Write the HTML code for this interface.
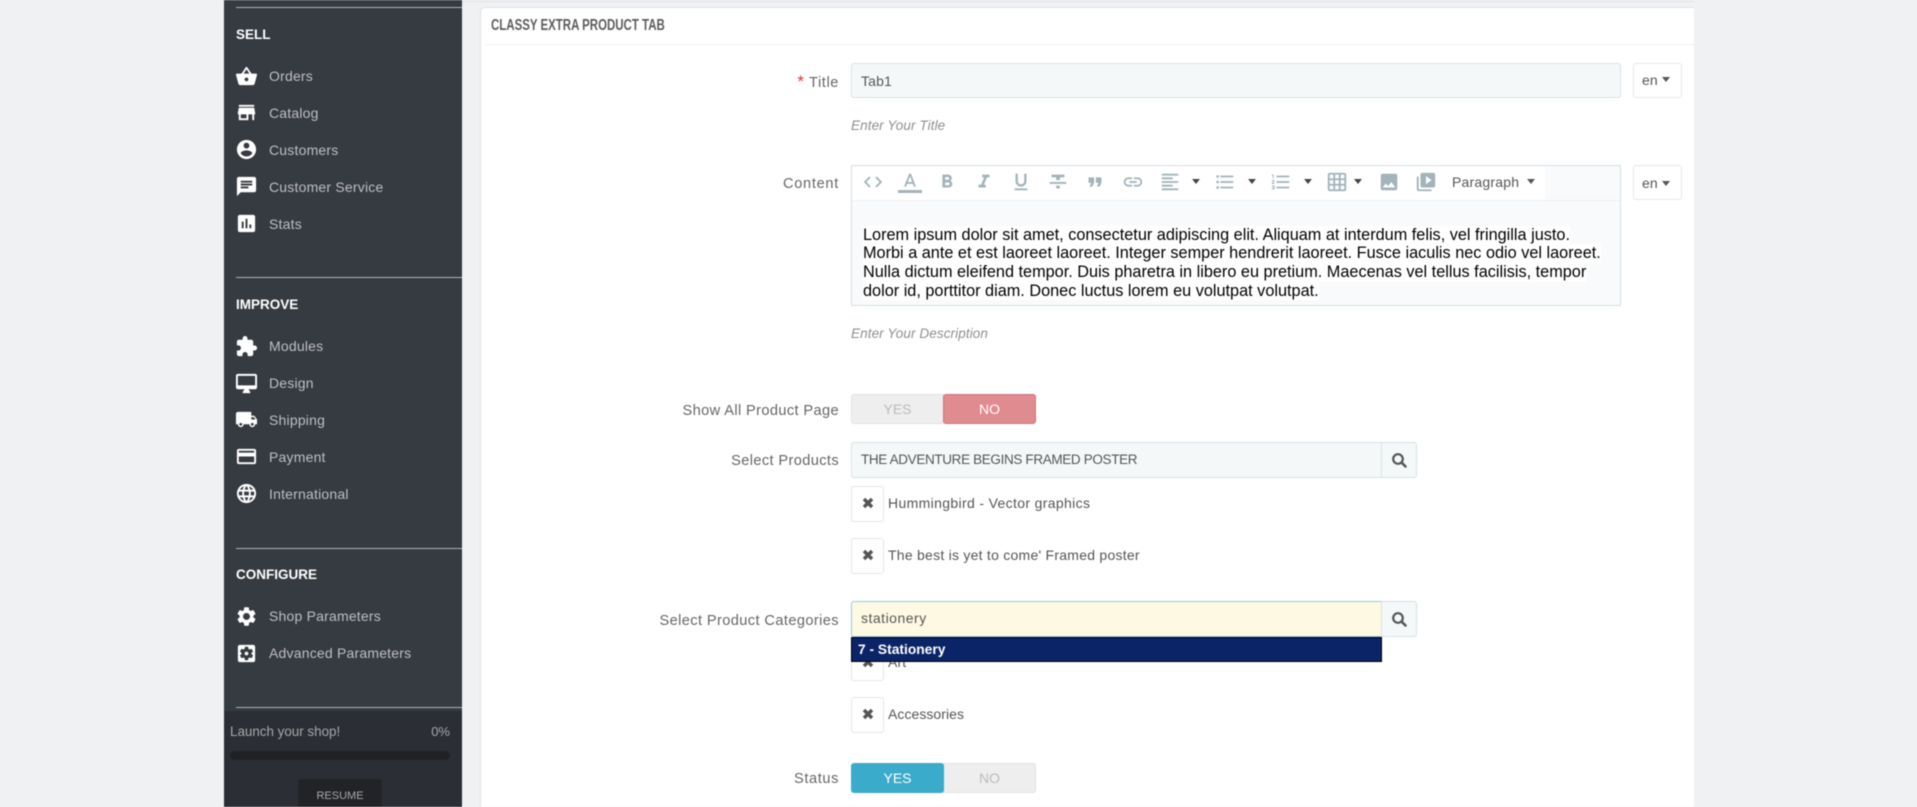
<!DOCTYPE html>
<html><head><meta charset="utf-8"><style>
html,body{margin:0;padding:0;width:1917px;height:807px;overflow:hidden;background:#eff1f3}
#r{position:relative;width:1917px;height:807px;overflow:hidden;font-family:"Liberation Sans",sans-serif;filter:blur(.4px)}
#r div,#r svg{position:absolute}
.t{white-space:nowrap;line-height:20px;height:20px;margin-top:1px}
.n{left:269px;color:#bdbfc2;font-size:14px;letter-spacing:.2px;margin-top:0}
.h{left:236px;color:#fff;font-size:13.5px;font-weight:bold}
.d{left:236px;width:226px;height:1px;background:#a7b7bd}
.si{left:235px;width:23px;height:23px;fill:#fff}
.l{right:1078px;color:#666;font-size:14.6px;letter-spacing:.38px;text-align:right}
.hint{left:851px;color:#8f8f8f;font-size:13.5px;font-style:italic;letter-spacing:.1px}
.inp{box-sizing:border-box;background:#f5f8f9;border:1px solid #d5e1e5;border-radius:3px}
.v{color:#555;font-size:14px;letter-spacing:.15px}
.en{box-sizing:border-box;left:1633px;width:49px;height:35px;background:#fff;border:1px solid #e4e9ea;border-radius:3px}
.car{width:0;height:0;border-left:4.5px solid transparent;border-right:4.5px solid transparent;border-top:5px solid #555}
.xb{box-sizing:border-box;left:851px;width:33px;height:36px;background:#fff;border:1px solid #e3e6e8;border-radius:3px}
.ti{width:22px;height:22px;top:171px;fill:#a2b3ba}
.tc{border-top-color:#444}
.b{margin-top:0;height:18.5px;line-height:18.5px;color:#000;font-size:16.27px;left:863px;background:#fff}
</style></head><body><div id="r">
<div style="left:224px;top:0;width:238px;height:807px;background:#363a41"></div>
<div class="d" style="top:7px"></div>
<div class="t h" style="top:24px">SELL</div>
<svg class="si" style="top:65px" viewBox="0 0 24 24"><path d="M17.21 9l-4.38-6.56c-.19-.28-.51-.42-.83-.42-.32 0-.64.14-.83.43L6.79 9H2c-.55 0-1 .45-1 1 0 .09.01.18.04.27l2.54 9.27c.23.84 1 1.46 1.92 1.46h13c.92 0 1.69-.62 1.93-1.46l2.54-9.27L23 10c0-.55-.45-1-1-1h-4.79zM9 9l3-4.4L15 9H9zm3 8c-1.1 0-2-.9-2-2s.9-2 2-2 2 .9 2 2-.9 2-2 2z"/></svg>
<div class="t n" style="top:66px">Orders</div>
<svg class="si" style="top:101px" viewBox="0 0 24 24"><path d="M20 4H4v2h16V4zm1 10v-2l-1-5H4l-1 5v2h1v6h10v-6h4v6h2v-6h1zm-9 4H6v-4h6v4z"/></svg>
<div class="t n" style="top:103px">Catalog</div>
<svg class="si" style="top:138px" viewBox="0 0 24 24"><path d="M12 2C6.48 2 2 6.48 2 12s4.48 10 10 10 10-4.48 10-10S17.52 2 12 2zm0 3c1.66 0 3 1.34 3 3s-1.34 3-3 3-3-1.34-3-3 1.34-3 3-3zm0 14.2c-2.5 0-4.71-1.28-6-3.22.03-1.99 4-3.08 6-3.08 1.99 0 5.97 1.09 6 3.08-1.29 1.94-3.5 3.22-6 3.22z"/></svg>
<div class="t n" style="top:140px">Customers</div>
<svg class="si" style="top:175px" viewBox="0 0 24 24"><path d="M20 2H4c-1.1 0-1.99.9-1.99 2L2 22l4-4h14c1.1 0 2-.9 2-2V4c0-1.1-.9-2-2-2zM6 9h12v2H6V9zm8 5H6v-2h8v2zm4-6H6V6h12v2z"/></svg>
<div class="t n" style="top:177px">Customer Service</div>
<svg class="si" style="top:212px" viewBox="0 0 24 24"><path d="M19 3H5c-1.1 0-2 .9-2 2v14c0 1.1.9 2 2 2h14c1.1 0 2-.9 2-2V5c0-1.1-.9-2-2-2zM9 17H7v-7h2v7zm4 0h-2V7h2v10zm4 0h-2v-4h2v4z"/></svg>
<div class="t n" style="top:214px">Stats</div>

<div class="d" style="top:277px"></div>
<div class="t h" style="top:294px">IMPROVE</div>
<svg class="si" style="top:335px" viewBox="0 0 24 24"><path d="M20.5 11H19V7c0-1.1-.9-2-2-2h-4V3.5C13 2.12 11.88 1 10.5 1S8 2.12 8 3.5V5H4c-1.1 0-1.99.9-1.99 2v3.8H3.5c1.49 0 2.7 1.21 2.7 2.7s-1.21 2.7-2.7 2.7H2V20c0 1.1.9 2 2 2h3.8v-1.5c0-1.49 1.21-2.7 2.7-2.7 1.49 0 2.7 1.21 2.7 2.7V22H17c1.1 0 2-.9 2-2v-4h1.5c1.38 0 2.5-1.12 2.5-2.5S21.88 11 20.5 11z"/></svg>
<div class="t n" style="top:336px">Modules</div>
<svg class="si" style="top:372px" viewBox="0 0 24 24"><path d="M21 2H3c-1.1 0-2 .9-2 2v12c0 1.1.9 2 2 2h7l-2 3v1h8v-1l-2-3h7c1.1 0 2-.9 2-2V4c0-1.1-.9-2-2-2zm0 12H3V4h18v10z"/></svg>
<div class="t n" style="top:373px">Design</div>
<svg class="si" style="top:408px" viewBox="0 0 24 24"><path d="M20 8h-3V4H3c-1.1 0-2 .9-2 2v11h2c0 1.66 1.34 3 3 3s3-1.34 3-3h6c0 1.66 1.34 3 3 3s3-1.34 3-3h2v-5l-3-4zM6 18.5c-.83 0-1.5-.67-1.5-1.5s.67-1.5 1.5-1.5 1.5.67 1.5 1.5-.67 1.5-1.5 1.5zm13.5-9l1.96 2.5H17V9.5h2.5zm-1.5 9c-.83 0-1.5-.67-1.5-1.5s.67-1.5 1.5-1.5 1.5.67 1.5 1.5-.67 1.5-1.5 1.5z"/></svg>
<div class="t n" style="top:410px">Shipping</div>
<svg class="si" style="top:445px" viewBox="0 0 24 24"><path d="M20 4H4c-1.11 0-1.99.89-1.99 2L2 18c0 1.11.89 2 2 2h16c1.11 0 2-.89 2-2V6c0-1.11-.89-2-2-2zm0 14H4v-6h16v6zm0-10H4V6h16v2z"/></svg>
<div class="t n" style="top:447px">Payment</div>
<svg class="si" style="top:482px" viewBox="0 0 24 24"><path d="M11.99 2C6.47 2 2 6.48 2 12s4.47 10 9.99 10C17.52 22 22 17.52 22 12S17.52 2 11.99 2zm6.93 6h-2.95c-.32-1.25-.78-2.45-1.38-3.56 1.84.63 3.37 1.91 4.33 3.56zM12 4.04c.83 1.2 1.48 2.53 1.91 3.96h-3.82c.43-1.43 1.08-2.76 1.91-3.96zM4.26 14C4.1 13.36 4 12.69 4 12s.1-1.36.26-2h3.38c-.08.66-.14 1.32-.14 2 0 .68.06 1.34.14 2H4.26zm.82 2h2.95c.32 1.25.78 2.45 1.38 3.56-1.84-.63-3.37-1.9-4.33-3.56zm2.95-8H5.08c.96-1.66 2.49-2.93 4.33-3.56C8.81 5.55 8.35 6.75 8.03 8zM12 19.96c-.83-1.2-1.48-2.53-1.91-3.96h3.82c-.43 1.43-1.08 2.76-1.91 3.96zM14.34 14H9.66c-.09-.66-.16-1.32-.16-2 0-.68.07-1.35.16-2h4.68c.09.65.16 1.32.16 2 0 .68-.07 1.34-.16 2zm.25 5.56c.6-1.11 1.06-2.31 1.38-3.56h2.95c-.96 1.65-2.49 2.93-4.33 3.56zM16.36 14c.08-.66.14-1.32.14-2 0-.68-.06-1.34-.14-2h3.38c.16.64.26 1.31.26 2s-.1 1.36-.26 2h-3.38z"/></svg>
<div class="t n" style="top:484px">International</div>

<div class="d" style="top:548px"></div>
<div class="t h" style="top:564px">CONFIGURE</div>
<svg class="si" style="top:605px" viewBox="0 0 24 24"><path d="M19.14 12.94c.04-.3.06-.61.06-.94 0-.32-.02-.64-.07-.94l2.03-1.58c.18-.14.23-.41.12-.61l-1.92-3.32c-.12-.22-.37-.29-.59-.22l-2.39.96c-.5-.38-1.03-.7-1.62-.94l-.36-2.54c-.04-.24-.24-.41-.48-.41h-3.84c-.24 0-.43.17-.47.41l-.36 2.54c-.59.24-1.13.57-1.62.94l-2.39-.96c-.22-.08-.47 0-.59.22L2.74 8.87c-.12.21-.08.47.12.61l2.03 1.58c-.05.3-.09.63-.09.94s.02.64.07.94l-2.03 1.58c-.18.14-.23.41-.12.61l1.92 3.32c.12.22.37.29.59.22l2.39-.96c.5.38 1.03.7 1.62.94l.36 2.54c.05.24.24.41.48.41h3.84c.24 0 .44-.17.47-.41l.36-2.54c.59-.24 1.13-.56 1.62-.94l2.39.96c.22.08.47 0 .59-.22l1.92-3.32c.12-.22.07-.47-.12-.61l-2.01-1.58zM12 15.6c-1.98 0-3.6-1.62-3.6-3.6s1.62-3.6 3.6-3.6 3.6 1.62 3.6 3.6-1.62 3.6-3.6 3.6z"/></svg>
<div class="t n" style="top:606px">Shop Parameters</div>
<svg class="si" style="top:642px" viewBox="0 0 24 24"><path d="M12 10c-1.1 0-2 .9-2 2s.9 2 2 2 2-.9 2-2-.9-2-2-2zm7-7H5c-1.11 0-2 .9-2 2v14c0 1.1.89 2 2 2h14c1.11 0 2-.9 2-2V5c0-1.1-.89-2-2-2zm-1.75 9c0 .23-.02.46-.05.68l1.48 1.16c.13.11.17.3.08.45l-1.4 2.42c-.09.15-.27.21-.43.15l-1.74-.7c-.36.28-.76.51-1.18.69l-.26 1.85c-.03.17-.18.3-.35.3h-2.8c-.17 0-.32-.13-.35-.29l-.26-1.85c-.43-.18-.82-.41-1.18-.69l-1.74.7c-.16.06-.34 0-.43-.15l-1.4-2.42c-.09-.15-.05-.34.08-.45l1.48-1.16c-.03-.23-.05-.46-.05-.69 0-.23.02-.46.05-.68l-1.48-1.16c-.13-.11-.17-.3-.08-.45l1.4-2.42c.09-.15.27-.21.43-.15l1.74.7c.36-.28.76-.51 1.18-.69l.26-1.85c.03-.17.18-.3.35-.3h2.8c.17 0 .32.13.35.29l.26 1.85c.43.18.82.41 1.18.69l1.74-.7c.16-.06.34 0 .43.15l1.4 2.42c.09.15.05.34-.08.45l-1.48 1.16c.03.23.05.46.05.69z"/></svg>
<div class="t n" style="top:643px">Advanced Parameters</div>
<div class="d" style="top:707px"></div>
<div style="left:224px;top:711px;width:238px;height:96px;background:#2b2e34"></div>
<div class="t" style="left:230px;top:720.5px;color:#a5a8ab;font-size:13.4px">Launch your shop!</div>
<div class="t" style="right:1467px;top:720.5px;color:#a5a8ab;font-size:13px">0%</div>
<div style="left:230px;top:751px;width:220px;height:9px;border-radius:5px;background:#1f2125"></div>
<div style="left:298px;top:779px;width:84px;height:28px;border-radius:3px 3px 0 0;background:#212327"></div>
<div class="t" style="left:298px;width:84px;top:785px;text-align:center;color:#a5a8ab;font-size:11px">RESUME</div>

<div style="left:462px;top:1px;width:1232px;height:1px;background:#e3e6e8"></div>
<div style="box-sizing:border-box;left:480px;top:7px;width:1214px;height:800px;background:#fff;border:1px solid #dfe4e7;border-right:0;border-bottom:0;border-radius:5px 0 0 0"></div>
<div class="t" style="left:491px;top:15px;color:#5c5c5c;font-size:15.5px;font-weight:bold;transform:scaleX(.74);transform-origin:0 50%">CLASSY EXTRA PRODUCT TAB</div>
<div style="left:485px;top:44px;width:1209px;height:1px;background:#eef0f1"></div>

<div class="t l" style="top:71px;letter-spacing:.6px"><span style="color:#e0313c;font-size:17px">*</span> Title</div>
<div class="inp" style="left:851px;top:63px;width:770px;height:35px"></div>
<div class="t v" style="left:861px;top:69.5px">Tab1</div>
<div class="en" style="top:63px"></div><div class="t v" style="left:1642px;top:69px">en</div><div class="car" style="left:1662px;top:77px"></div>
<div class="t hint" style="top:115px">Enter Your Title</div>

<div class="t l" style="top:173px;letter-spacing:.7px">Content</div>
<div class="inp" style="left:851px;top:165px;width:770px;height:141px;background:#f8fafb;border-radius:0"></div>
<div style="left:852px;top:166px;width:693px;height:34px;background:#fff"></div>
<div style="left:852px;top:200px;width:768px;height:1px;background:#eef1f3"></div>
<svg class="ti" style="left:862px" viewBox="0 0 24 24"><path d="M9.4 16.6L4.8 12l4.6-4.6L8 6l-6 6 6 6 1.4-1.4zm5.2 0l4.6-4.6-4.6-4.6L16 6l6 6-6 6-1.4-1.4z"/></svg>
<svg class="ti" style="left:899px;top:171px" viewBox="0 0 24 24"><path d="M11 3L5.5 17h2.25l1.12-3h6.25l1.12 3h2.25L13 3h-2zm-1.38 9L12 5.67 14.38 12H9.62z"/></svg>
<div style="left:898px;top:190px;width:24px;height:3px;background:#a2b3ba"></div>
<svg class="ti" style="left:936px" viewBox="0 0 24 24"><path d="M15.6 10.79c.97-.67 1.65-1.77 1.65-2.79 0-2.26-1.75-4-4-4H7v14h7.04c2.09 0 3.71-1.7 3.71-3.79 0-1.52-.86-2.82-2.15-3.42zM10 6.5h3c.83 0 1.5.67 1.5 1.5s-.67 1.5-1.5 1.5h-3v-3zm3.5 9H10v-3h3.5c.83 0 1.5.67 1.5 1.5s-.67 1.5-1.5 1.5z"/></svg>
<svg class="ti" style="left:973px" viewBox="0 0 24 24"><path d="M10 4v3h2.21l-3.42 8H6v3h8v-3h-2.21l3.42-8H18V4z"/></svg>
<svg class="ti" style="left:1010px" viewBox="0 0 24 24"><path d="M12 17c3.31 0 6-2.69 6-6V3h-2.5v8c0 1.93-1.57 3.5-3.5 3.5S8.5 12.93 8.5 11V3H6v8c0 3.31 2.69 6 6 6zm-7 2v2h14v-2H5z"/></svg>
<svg class="ti" style="left:1047px" viewBox="0 0 24 24"><path d="M10 19h4v-3h-4v3zM5 4v3h5v3h4V7h5V4H5zM3 14h18v-2H3v2z"/></svg>
<svg class="ti" style="left:1084px" viewBox="0 0 24 24"><path d="M6 17h3l2-4V7H5v6h3zm8 0h3l2-4V7h-6v6h3z"/></svg>
<svg class="ti" style="left:1122px" viewBox="0 0 24 24"><path d="M3.9 12c0-1.71 1.39-3.1 3.1-3.1h4V7H7c-2.76 0-5 2.24-5 5s2.24 5 5 5h4v-1.9H7c-1.71 0-3.1-1.39-3.1-3.1zM8 13h8v-2H8v2zm9-6h-4v1.9h4c1.71 0 3.1 1.39 3.1 3.1s-1.39 3.1-3.1 3.1h-4V17h4c2.76 0 5-2.24 5-5s-2.24-5-5-5z"/></svg>
<svg class="ti" style="left:1159px" viewBox="0 0 24 24"><path d="M15 15H3v2h12v-2zm0-8H3v2h12V7zM3 13h18v-2H3v2zm0 8h18v-2H3v2zM3 3v2h18V3H3z"/></svg>
<div class="car tc" style="left:1192px;top:179px"></div>
<svg class="ti" style="left:1214px" viewBox="0 0 24 24"><path d="M4 10.5c-.83 0-1.5.67-1.5 1.5s.67 1.5 1.5 1.5 1.5-.67 1.5-1.5-.67-1.5-1.5-1.5zm0-6c-.83 0-1.5.67-1.5 1.5S3.17 7.5 4 7.5 5.5 6.83 5.5 6 4.83 4.5 4 4.5zm0 12c-.83 0-1.5.68-1.5 1.5s.68 1.5 1.5 1.5 1.5-.68 1.5-1.5-.67-1.5-1.5-1.5zM7 19h14v-2H7v2zm0-6h14v-2H7v2zm0-8v2h14V5H7z"/></svg>
<div class="car tc" style="left:1248px;top:179px"></div>
<svg class="ti" style="left:1270px" viewBox="0 0 24 24"><path d="M2 17h2v.5H3v1h1v.5H2v1h3v-4H2v1zm1-9h1V4H2v1h1v3zm-1 3h1.8L2 13.1v.9h3v-1H3.2L5 10.9V10H2v1zm5-6v2h14V5H7zm0 14h14v-2H7v2zm0-6h14v-2H7v2z"/></svg>
<div class="car tc" style="left:1304px;top:179px"></div>
<svg class="ti" style="left:1326px" viewBox="0 0 24 24"><path d="M20 2H4c-1.1 0-2 .9-2 2v16c0 1.1.9 2 2 2h16c1.1 0 2-.9 2-2V4c0-1.1-.9-2-2-2zM8 20H4v-4h4v4zm0-6H4v-4h4v4zm0-6H4V4h4v4zm6 12h-4v-4h4v4zm0-6h-4v-4h4v4zm0-6h-4V4h4v4zm6 12h-4v-4h4v4zm0-6h-4v-4h4v4zm0-6h-4V4h4v4z"/></svg>
<div class="car tc" style="left:1354px;top:179px"></div>
<svg class="ti" style="left:1378px" viewBox="0 0 24 24"><path d="M21 19V5c0-1.1-.9-2-2-2H5c-1.1 0-2 .9-2 2v14c0 1.1.9 2 2 2h14c1.1 0 2-.9 2-2zM8.5 13.5l2.5 3.01L14.5 12l4.5 6H5l3.5-4.5z"/></svg>
<svg class="ti" style="left:1415px" viewBox="0 0 24 24"><path d="M4 6H2v14c0 1.1.9 2 2 2h14v-2H4V6zm16-4H8c-1.1 0-2 .9-2 2v12c0 1.1.9 2 2 2h12c1.1 0 2-.9 2-2V4c0-1.1-.9-2-2-2zm-8 12.5v-9l6 4.5-6 4.5z"/></svg>
<div class="t" style="left:1452px;top:171px;color:#555;font-size:14px;letter-spacing:.2px">Paragraph</div>
<div class="car" style="left:1527px;top:179px"></div>
<div class="t b" style="top:225.5px">Lorem ipsum dolor sit amet, consectetur adipiscing elit. Aliquam at interdum felis, vel fringilla justo.</div>
<div class="t b" style="top:244px">Morbi a ante et est laoreet laoreet. Integer semper hendrerit laoreet. Fusce iaculis nec odio vel laoreet.</div>
<div class="t b" style="top:263px">Nulla dictum eleifend tempor. Duis pharetra in libero eu pretium. Maecenas vel tellus facilisis, tempor</div>
<div class="t b" style="top:281.5px">dolor id, porttitor diam. Donec luctus lorem eu volutpat volutpat.</div>
<div class="en" style="top:165px"></div><div class="t v" style="left:1642px;top:172px">en</div><div class="car" style="left:1662px;top:181px"></div>
<div class="t hint" style="top:323px">Enter Your Description</div>

<div class="t l" style="top:400px">Show All Product Page</div>
<div style="box-sizing:border-box;left:851px;top:394px;width:93px;height:30px;background:#eee;border:1px solid #e2e2e2;border-radius:3px 0 0 3px"></div>
<div class="t" style="left:851px;width:93px;top:398px;text-align:center;color:#bbb;font-size:14px">YES</div>
<div style="box-sizing:border-box;left:943px;top:394px;width:93px;height:30px;background:#e08b90;border:1px solid #cf757b;border-radius:3px"></div>
<div class="t" style="left:943px;width:93px;top:398px;text-align:center;color:#fff;font-size:14px">NO</div>

<div class="t l" style="top:450px">Select Products</div>
<div class="inp" style="left:851px;top:442px;width:531px;height:36px;border-radius:3px 0 0 3px"></div>
<div class="inp" style="left:1381px;top:442px;width:36px;height:36px;border-radius:0 3px 3px 0"></div>
<div class="t v" style="left:861px;top:449px;font-size:13.5px;letter-spacing:-.35px">THE ADVENTURE BEGINS FRAMED POSTER</div>
<svg style="left:1390px;top:451px;width:18px;height:18px" viewBox="0 0 18 18"><circle cx="8" cy="8" r="4.8" fill="none" stroke="#555" stroke-width="2.2"/><path d="M11.5 11.5l4 4" stroke="#555" stroke-width="2.6" stroke-linecap="round"/></svg>
<div class="xb" style="top:486px"></div>
<svg style="left:861px;top:496px;width:14px;height:14px" viewBox="0 0 14 14"><path d="M3 3l8 8M11 3l-8 8" stroke="#555" stroke-width="3.5"/></svg>
<div class="t v" style="left:888px;top:491.5px;letter-spacing:.35px">Hummingbird - Vector graphics</div>
<div class="xb" style="top:538px"></div>
<svg style="left:861px;top:548px;width:14px;height:14px" viewBox="0 0 14 14"><path d="M3 3l8 8M11 3l-8 8" stroke="#555" stroke-width="3.5"/></svg>
<div class="t v" style="left:888px;top:543.5px;letter-spacing:.25px">The best is yet to come' Framed poster</div>

<div class="t l" style="top:610px;letter-spacing:.4px">Select Product Categories</div>
<div class="xb" style="top:645px"></div>
<svg style="left:861px;top:655px;width:14px;height:14px" viewBox="0 0 14 14"><path d="M3 3l8 8M11 3l-8 8" stroke="#555" stroke-width="3.5"/></svg>
<div class="t v" style="left:888px;top:651px">Art</div>
<div class="inp" style="left:851px;top:601px;width:531px;height:36px;background:#fef9e3;border-color:#97c8ea;border-radius:3px 0 0 3px"></div>
<div class="inp" style="left:1381px;top:601px;width:36px;height:36px;border-radius:0 3px 3px 0"></div>
<div class="t v" style="left:861px;top:607px;letter-spacing:.5px">stationery</div>
<svg style="left:1390px;top:610px;width:18px;height:18px" viewBox="0 0 18 18"><circle cx="8" cy="8" r="4.8" fill="none" stroke="#555" stroke-width="2.2"/><path d="M11.5 11.5l4 4" stroke="#555" stroke-width="2.6" stroke-linecap="round"/></svg>
<div style="box-sizing:border-box;left:851px;top:637px;width:531px;height:25px;background:#0b2468;border:1px solid #000"></div>
<div class="t" style="left:858px;top:639px;color:#fff;font-size:13.8px;font-weight:bold">7 - Stationery</div>
<div class="xb" style="top:697px"></div>
<svg style="left:861px;top:707px;width:14px;height:14px" viewBox="0 0 14 14"><path d="M3 3l8 8M11 3l-8 8" stroke="#555" stroke-width="3.5"/></svg>
<div class="t v" style="left:888px;top:703px;letter-spacing:.05px">Accessories</div>

<div class="t l" style="top:768px;letter-spacing:.6px">Status</div>
<div style="box-sizing:border-box;left:943px;top:763px;width:93px;height:30px;background:#eee;border:1px solid #e2e2e2;border-radius:0 3px 3px 0"></div>
<div class="t" style="left:943px;width:93px;top:767px;text-align:center;color:#bbb;font-size:14px">NO</div>
<div style="left:851px;top:763px;width:93px;height:30px;background:#3aabca;border-radius:3px"></div>
<div class="t" style="left:851px;width:93px;top:767px;text-align:center;color:#fff;font-size:14px">YES</div>
</div></body></html>
